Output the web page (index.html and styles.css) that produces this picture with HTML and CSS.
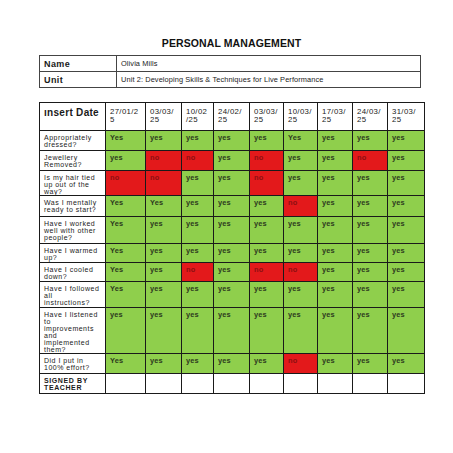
FILE: index.html
```html
<!DOCTYPE html>
<html>
<head>
<meta charset="utf-8">
<link rel="stylesheet" href="styles.css">
</head>
<body>
<div class="page">
  <h1 class="title">PERSONAL MANAGEMENT</h1>
  <table class="info">
    <colgroup><col class="info-key"><col></colgroup>
    <tr><th>Name</th><td>Olivia Mills</td></tr>
    <tr><th>Unit</th><td>Unit 2: Developing Skills &amp; Techniques for Live Performance</td></tr>
  </table>
  <table class="grid">
    <colgroup>
      <col class="c-label"><col class="c1"><col class="c2"><col class="c3"><col class="c4"><col class="c5"><col class="c6"><col class="c7"><col class="c8"><col class="c9">
    </colgroup>
    <tr class="r-head">
      <th class="label-head">ınsert Date</th>
      <th>27/01/2<br>5</th><th>03/03/<br>25</th><th>10/02<br>/25</th><th>24/02/<br>25</th><th>03/03/<br>25</th><th>10/03/<br>25</th><th>17/03/<br>25</th><th>24/03/<br>25</th><th>31/03/<br>25</th>
    </tr>
    <tr class="r20">
      <th>Appropriately<br>dressed?</th>
      <td class="y">Yes</td><td class="y">yes</td><td class="y">yes</td><td class="y">yes</td><td class="y">yes</td><td class="y">Yes</td><td class="y">yes</td><td class="y">yes</td><td class="y">yes</td>
    </tr>
    <tr class="r20">
      <th>Jewellery<br>Removed?</th>
      <td class="y">yes</td><td class="n">no</td><td class="n">no</td><td class="y">yes</td><td class="n">no</td><td class="y">yes</td><td class="y">yes</td><td class="n">no</td><td class="y">yes</td>
    </tr>
    <tr class="r25">
      <th>Is my hair tied<br>up out of the<br>way?</th>
      <td class="n">no</td><td class="n">no</td><td class="y">yes</td><td class="y">yes</td><td class="n">no</td><td class="y">yes</td><td class="y">yes</td><td class="y">yes</td><td class="y">yes</td>
    </tr>
    <tr class="r21">
      <th>Was I mentally<br>ready to start?</th>
      <td class="y">Yes</td><td class="y">Yes</td><td class="y">yes</td><td class="y">yes</td><td class="y">yes</td><td class="n">no</td><td class="y">yes</td><td class="y">yes</td><td class="y">yes</td>
    </tr>
    <tr class="r27">
      <th>Have I worked<br>well with other<br>people?</th>
      <td class="y">Yes</td><td class="y">yes</td><td class="y">yes</td><td class="y">yes</td><td class="y">yes</td><td class="y">yes</td><td class="y">yes</td><td class="y">yes</td><td class="y">yes</td>
    </tr>
    <tr class="r19">
      <th>Have I warmed<br>up?</th>
      <td class="y">Yes</td><td class="y">yes</td><td class="y">yes</td><td class="y">yes</td><td class="y">yes</td><td class="y">yes</td><td class="y">yes</td><td class="y">yes</td><td class="y">yes</td>
    </tr>
    <tr class="r19">
      <th>Have I cooled<br>down?</th>
      <td class="y">Yes</td><td class="y">yes</td><td class="n">no</td><td class="y">yes</td><td class="n">no</td><td class="n">no</td><td class="y">yes</td><td class="y">yes</td><td class="y">yes</td>
    </tr>
    <tr class="r26">
      <th>Have I followed<br>all<br>instructions?</th>
      <td class="y">Yes</td><td class="y">yes</td><td class="y">yes</td><td class="y">yes</td><td class="y">yes</td><td class="y">yes</td><td class="y">yes</td><td class="y">yes</td><td class="y">yes</td>
    </tr>
    <tr class="r46">
      <th>Have I listened<br>to<br>improvements<br>and<br>implemented<br>them?</th>
      <td class="y">yes</td><td class="y">yes</td><td class="y">yes</td><td class="y">yes</td><td class="y">yes</td><td class="y">yes</td><td class="y">yes</td><td class="y">yes</td><td class="y">yes</td>
    </tr>
    <tr class="r20">
      <th>Did I put in<br>100% effort?</th>
      <td class="y">Yes</td><td class="y">yes</td><td class="y">yes</td><td class="y">yes</td><td class="y">yes</td><td class="n">no</td><td class="y">yes</td><td class="y">yes</td><td class="y">yes</td>
    </tr>
    <tr class="r20">
      <th class="signed">SIGNED BY<br>TEACHER</th>
      <td></td><td></td><td></td><td></td><td></td><td></td><td></td><td></td><td></td>
    </tr>
  </table>
</div>
</body>
</html>
```

FILE: styles.css
```css
html, body {
  margin: 0;
  padding: 0;
  background: #ffffff;
}

body {
  font-family: "Liberation Sans", Arial, sans-serif;
  color: #1a1a1a;
}

.page {
  width: 453px;
  height: 453px;
  box-sizing: border-box;
  padding: 37px 0 0 39px;
}

.title {
  margin: 0 0 6px 0;
  width: 385px;
  text-align: center;
  font-size: 10.5px;
  line-height: 12px;
  font-weight: bold;
  letter-spacing: 0.1px;
  color: #111;
}

.info {
  width: 382px;
  border-collapse: collapse;
  table-layout: fixed;
  border: 1px solid #555;
  margin-bottom: 14px;
}

.info-key {
  width: 77px;
}

.info th,
.info td {
  box-sizing: border-box;
  border: 1px solid #444;
  height: 16px;
  padding: 0 4px;
  text-align: left;
  vertical-align: middle;
  line-height: 10px;
}

.info th {
  font-size: 9px;
  font-weight: bold;
  letter-spacing: 0.4px;
}

.info td {
  font-size: 7.4px;
  letter-spacing: 0.1px;
}

.grid {
  width: 385px;
  border-collapse: collapse;
  table-layout: fixed;
}

.c-label { width: 66px; }
.c1 { width: 40px; }
.c2 { width: 36px; }
.c3 { width: 32px; }
.c4 { width: 36px; }
.c5 { width: 34px; }
.c6 { width: 34px; }
.c7 { width: 35px; }
.c8 { width: 35px; }
.c9 { width: 37px; }

.grid th,
.grid td {
  box-sizing: border-box;
  border: 1px solid #1a1a1a;
  padding: 3px 0 0 4px;
  text-align: left;
  vertical-align: top;
  overflow: hidden;
  white-space: nowrap;
}

.grid th {
  font-size: 7px;
  line-height: 7px;
  font-weight: normal;
  letter-spacing: 0.5px;
  color: #1a1a1a;
}

.grid .r-head th {
  height: 28px;
  font-size: 7.8px;
  line-height: 7.8px;
  padding-top: 5px;
  letter-spacing: 0.35px;
  background: #fff;
}

.grid .r-head .label-head {
  font-size: 10px;
  font-weight: bold;
  line-height: 10px;
  letter-spacing: 0.3px;
  padding-top: 5px;
}

.grid .signed {
  font-weight: bold;
  letter-spacing: 0.6px;
}

.grid td {
  font-size: 7.4px;
  line-height: 8px;
  font-weight: bold;
  letter-spacing: 0.2px;
  padding-top: 3px;
}

.grid td.y {
  background: #8fcf4c;
  color: #2d3a1e;
}

.grid td.n {
  background: #e3191b;
  color: #8e1012;
}

.r20 th, .r20 td { height: 20px; }
.r19 th, .r19 td { height: 19px; }
.r21 th, .r21 td { height: 21px; }
.r25 th, .r25 td { height: 25px; }
.r26 th, .r26 td { height: 26px; }
.r27 th, .r27 td { height: 27px; }
.r46 th, .r46 td { height: 46px; }
```
